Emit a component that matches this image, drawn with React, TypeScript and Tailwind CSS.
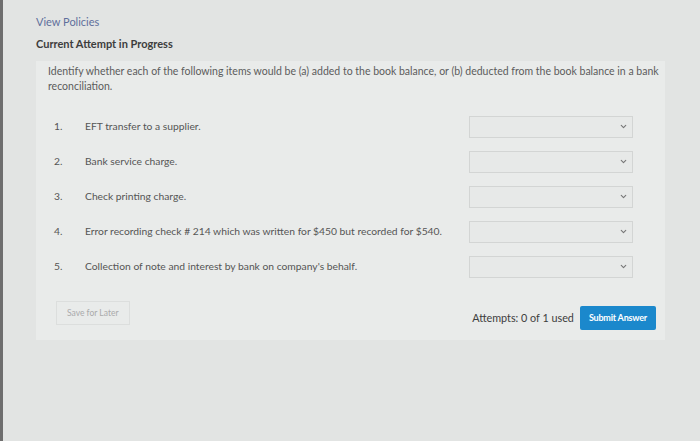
import { ChevronDown } from 'lucide-react';

const items = [
  'EFT transfer to a supplier.',
  'Bank service charge.',
  'Check printing charge.',
  'Error recording check # 214 which was written for $450 but recorded for $540.',
  "Collection of note and interest by bank on company's behalf.",
];

export default function App() {
  return (
    <div
      className="w-[700px] h-[441px] overflow-hidden bg-[#e2e4e3] border-l-[3px] border-[#6e6e6e] text-[#555]"
      style={{ fontFamily: 'Lato, "Open Sans", sans-serif' }}
    >
      <div className="pl-[33px] pt-[15px] pr-[35px]">
        <div className="text-[11px] leading-[14px] text-[#5f6f9c]">View Policies</div>
        <div className="mt-[8px] text-[11px] leading-[14px] font-bold text-[#3d3d3d]">
          Current Attempt in Progress
        </div>

        <div className="mt-[10px] bg-[#e9ebea] pl-[12px] pr-[30px] pt-[3px] pb-[10px]">
          <p className="text-[10.5px] leading-[15px] text-[#5c5c5c] mr-[-30px]">
            Identify whether each of the following items would be (a) added to the book balance, or (b) deducted from the book balance in a bank reconciliation.
          </p>

          <div className="mt-[15px] flex flex-col">
            {items.map((t, i) => (
              <div key={i} className="flex items-center h-[35px]">
                <div className="w-[37px] pl-[6px] text-[10.3px] text-[#555]">{i + 1}.</div>
                <div className="flex-1 text-[10.3px] text-[#555]">{t}</div>
                <div className="mr-[2px] w-[164px] h-[22px] border border-[#d3d5d4] bg-[#e7e9e8] flex items-center justify-end pr-[4px]">
                  <ChevronDown size={9} strokeWidth={3} className="text-[#777]" />
                </div>
              </div>
            ))}
          </div>

          <div className="mt-[17px] flex items-start justify-between">
            <button className="ml-[8px] h-[24px] px-[10px] border border-[#dcdedd] bg-[#e9ebea] text-[8.5px] text-[#aaa]">
              Save for Later
            </button>
            <div className="flex items-center mt-[5px] mr-[-21px]">
              <span className="text-[10.8px] text-[#3d3d3d] mr-[6px]">Attempts: 0 of 1 used</span>
              <button className="h-[24px] px-[9px] rounded-[2px] bg-[#1b88cc] text-[9px] font-bold tracking-[-0.2px] text-white">
                Submit Answer
              </button>
            </div>
          </div>
        </div>
      </div>
    </div>
  );
}
